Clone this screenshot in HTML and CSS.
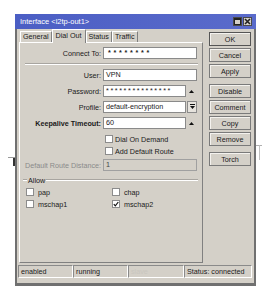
FILE: index.html
```html
<!DOCTYPE html>
<html lang="en">

<head>
    <meta charset="UTF-8">
    <title>Interface &lt;l2tp-out1&gt;</title>
    <link rel="stylesheet" href="styles.css">
</head>

<body>
    <span class="debris left-a"></span>
    <span class="debris left-b"></span>
    <span class="debris right-a"></span>
    <span class="debris right-b"></span>
    <div class="window">
        <div class="titlebar">
            <span class="title">Interface &lt;l2tp-out1&gt;</span>
            <div class="title-buttons">
                <span class="tbtn">
                    <svg width="7" height="7" viewBox="0 0 7 7"><rect x="0.5" y="0.5" width="6" height="6" fill="none" stroke="#222"/><rect x="0" y="0" width="7" height="2" fill="#222"/></svg>
                </span>
                <span class="tbtn">
                    <svg width="7" height="7" viewBox="0 0 7 7"><path d="M1 1L6 6M6 1L1 6" stroke="#222" stroke-width="1.6"/></svg>
                </span>
            </div>
        </div>
        <div class="frame">
            <div class="main">
                <div class="left">
                    <div class="tabs">
                        <span class="tab">General</span>
                        <span class="tab active">Dial Out</span>
                        <span class="tab">Status</span>
                        <span class="tab">Traffic</span>
                    </div>
                    <div class="panel">
                        <div class="row">
                            <label>Connect To:</label>
                            <div class="field"><span class="input mask">********</span></div>
                        </div>
                        <div class="sep"></div>
                        <div class="row">
                            <label>User:</label>
                            <div class="field"><span class="input">VPN</span></div>
                        </div>
                        <div class="row">
                            <label>Password:</label>
                            <div class="field">
                                <span class="input pass">***************</span>
                                <span class="arrow"><svg width="5" height="3" viewBox="0 0 5 3"><path d="M2.5 0L5 3H0z" fill="#111"/></svg></span>
                            </div>
                        </div>
                        <div class="row">
                            <label>Profile:</label>
                            <div class="field">
                                <span class="input">default-encryption</span>
                                <span class="arrow drop"><svg width="5" height="6" viewBox="0 0 5 6"><rect x="0" y="0" width="5" height="1" fill="#111"/><path d="M0 2H5L2.5 5z" fill="#111"/></svg></span>
                            </div>
                        </div>
                        <div class="row">
                            <label class="bold">Keepalive Timeout:</label>
                            <div class="field">
                                <span class="input">60</span>
                                <span class="arrow"><svg width="5" height="3" viewBox="0 0 5 3"><path d="M2.5 0L5 3H0z" fill="#111"/></svg></span>
                            </div>
                        </div>
                        <div class="checks">
                            <div class="row check">
                                <span></span>
                                <span class="opt"><span class="cb"></span>Dial On Demand</span>
                            </div>
                            <div class="row check">
                                <span></span>
                                <span class="opt"><span class="cb"></span>Add Default Route</span>
                            </div>
                        </div>
                        <div class="row">
                            <label class="disabled">Default Route Distance:</label>
                            <div class="field"><span class="input off">1</span></div>
                        </div>
                        <div class="group">
                            <div class="legend"><span class="line short"></span><span>Allow</span><span class="line"></span></div>
                            <div class="group-grid">
                                <span class="opt"><span class="cb"></span>pap</span>
                                <span class="opt"><span class="cb"></span>chap</span>
                                <span class="opt"><span class="cb"></span>mschap1</span>
                                <span class="opt"><span class="cb"><svg width="6" height="6" viewBox="0 0 6 6"><path d="M0.8 3.2L2.3 4.8L5.3 1" fill="none" stroke="#111" stroke-width="1.2"/></svg></span>mschap2</span>
                            </div>
                        </div>
                    </div>
                </div>
                <div class="side">
                    <button class="btn default">OK</button>
                    <button class="btn">Cancel</button>
                    <button class="btn">Apply</button>
                    <button class="btn spaced">Disable</button>
                    <button class="btn">Comment</button>
                    <button class="btn">Copy</button>
                    <button class="btn">Remove</button>
                    <button class="btn spaced">Torch</button>
                </div>
            </div>
            <div class="statusbar">
                <span class="cell c1">enabled</span>
                <span class="cell c2">running</span>
                <span class="cell c3 faded">slave</span>
                <span class="cell c4">Status: connected</span>
            </div>
        </div>
    </div>
</body>

</html>
```

FILE: styles.css
```css
* {
    margin: 0;
    padding: 0;
    box-sizing: border-box;
}

body {
    position: relative;
    background: #fff;
    font-family: "Liberation Sans", Arial, sans-serif;
    font-size: 7.2px;
    color: #1a1a1a;
}

/* bits of other windows peeking out behind the dialog */
.debris {
    position: absolute;
    display: block;
}

.debris.left-a {
    left: 8px;
    top: 157px;
    width: 7px;
    height: 1px;
    background: #9a9a9a;
}

.debris.left-b {
    left: 13px;
    top: 158px;
    width: 2px;
    height: 8px;
    background: #333;
}

.debris.right-a {
    left: 256px;
    top: 145px;
    width: 6px;
    height: 1px;
    background: #b0b0b0;
}

.debris.right-b {
    left: 259px;
    top: 145px;
    width: 1px;
    height: 15px;
    background: #c0c0c0;
}

.window {
    position: relative;
    width: 241px;
    margin: 14px 0 0 15px;
}

.titlebar {
    height: 15px;
    display: flex;
    align-items: center;
    justify-content: space-between;
    padding: 0 4px 0 5px;
    background: linear-gradient(to right, #4b5ec4, #5a6bcb);
    color: #fff;
    font-size: 7.5px;
}

.title-buttons {
    display: flex;
    gap: 1px;
}

.tbtn {
    width: 9px;
    height: 9px;
    display: flex;
    align-items: center;
    justify-content: center;
    background: #d4d0c8;
    border: 1px solid #4a4a4a;
}

.frame {
    background: #d4d0c8;
    border: 2px solid #707070;
    border-top: 0;
    border-bottom-width: 3px;
    padding-bottom: 5px;
}

.main {
    display: flex;
    padding-left: 2px;
}

.left {
    width: 184px;
}

.tabs {
    display: flex;
    align-items: flex-end;
    height: 13px;
    padding-left: 1px;
}

.tab {
    height: 11px;
    line-height: 10px;
    padding: 0 2px;
    border: 1px solid;
    border-color: #fff #808080 transparent #fff;
    border-bottom: 0;
}

.tab.active {
    position: relative;
    z-index: 1;
    height: 14px;
    line-height: 12px;
    margin-bottom: -1px;
    padding: 0 3px;
    background: #d4d0c8;
}

.panel {
    height: 221px;
    padding: 4px 0 0 1px;
    border: 1px solid;
    border-color: #fff #808080 #808080 #fff;
}

.row {
    display: grid;
    grid-template-columns: 80px 94px;
    column-gap: 2px;
    align-items: center;
    height: 12px;
    margin-bottom: 4px;
}

.row label {
    text-align: right;
    white-space: nowrap;
}

.row label.bold {
    font-weight: bold;
}

.row label.disabled {
    color: #8a8a8a;
}

.field {
    display: flex;
    height: 12px;
}

.input {
    flex: 1;
    height: 12px;
    line-height: 10px;
    padding-left: 2px;
    background: #fff;
    border: 1px solid #8a8a8a;
    white-space: nowrap;
    overflow: hidden;
}

.input.mask {
    letter-spacing: 2.7px;
    padding-left: 4px;
    font-weight: bold;
}

.input.pass {
    letter-spacing: 1.6px;
}

.input.off {
    background: #d4d0c8;
    border-color: #a0a0a0;
    color: #444;
}

.arrow {
    width: 11px;
    display: flex;
    align-items: center;
    justify-content: center;
}

.arrow.drop {
    margin-left: 1px;
    width: 10px;
    border: 1px solid #8a8a8a;
    background: #e6e3dd;
}

.sep {
    height: 2px;
    margin: 0 4px 4px 4px;
    border-top: 1px solid #a8a5a0;
    border-bottom: 1px solid #fff;
}

.checks {
    margin: 4px 0 2px;
}

.row.check {
    margin-bottom: 0;
}

.opt {
    display: flex;
    align-items: center;
    white-space: nowrap;
}

.cb {
    width: 8px;
    height: 8px;
    margin: 0 2px 0 2px;
    display: flex;
    align-items: center;
    justify-content: center;
    background: #fff;
    border: 1px solid #8c8c8c;
}

.group {
    margin: 5px 4px 0 2px;
}

.legend {
    display: flex;
    align-items: center;
    height: 8px;
}

.legend span {
    padding: 0 1px;
}

.legend .line {
    flex: 1;
    height: 2px;
    padding: 0;
    border-top: 1px solid #a8a5a0;
    border-bottom: 1px solid #fff;
}

.legend .line.short {
    flex: none;
    width: 4px;
}

.group-grid {
    display: grid;
    grid-template-columns: 86px 1fr;
    grid-auto-rows: 12px;
    align-items: center;
    margin-top: 2px;
    padding-left: 3px;
}

.group-grid .cb {
    margin-left: 0;
    margin-right: 4px;
}

.side {
    width: 42px;
    margin-left: 6px;
    padding-top: 3px;
    display: flex;
    flex-direction: column;
    gap: 2px;
}

.btn {
    height: 14px;
    font-family: inherit;
    font-size: 7.2px;
    color: #1a1a1a;
    background: #d4d0c8;
    border: 1px solid #7a7a7a;
    box-shadow: inset 1px 1px #f4f2ee;
}

.btn.default {
    border-color: #555;
}

.btn.spaced {
    margin-top: 4px;
}

.statusbar {
    display: flex;
    height: 13px;
    margin: 2px 2px 0 1px;
}

.cell {
    height: 13px;
    line-height: 11px;
    padding-left: 2px;
    border: 1px solid;
    border-color: #8a8a8a #fff #fff #8a8a8a;
    white-space: nowrap;
}

.c1,
.c2 {
    width: 55px;
}

.c3 {
    width: 56px;
}

.c4 {
    flex: 1;
}

.faded {
    color: #c9c6bf;
}
```
